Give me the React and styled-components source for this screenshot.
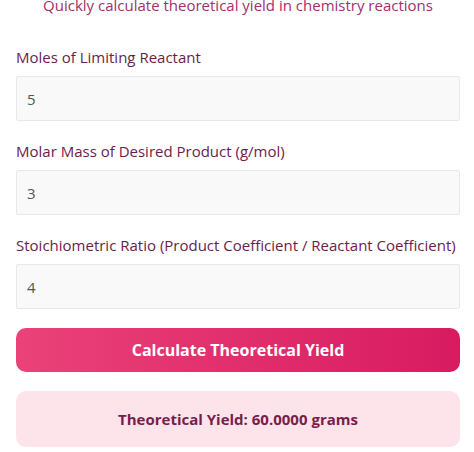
import React, { useState } from 'react'
import styled, { createGlobalStyle } from 'styled-components'

const GlobalStyle = createGlobalStyle`
  html, body {
    margin: 0;
    padding: 0;
    background: #ffffff;
    font-family: "Open Sans", "Noto Sans", sans-serif;
  }
`

const Wrapper = styled.div`
  width: 474px;
  padding: 0 14px 0 16px;
  box-sizing: border-box;
`

const Subtitle = styled.p`
  margin: -6px 0 0;
  text-align: center;
  font-size: 15px;
  line-height: 22px;
  color: #a3306a;
`

const Form = styled.div`
  display: flex;
  flex-direction: column;
  margin-top: 30px;
`

const Field = styled.div`
  display: flex;
  flex-direction: column;
  gap: 8px;
  margin-bottom: 19px;
`

const Label = styled.label`
  font-size: 15px;
  line-height: 22px;
  color: #6b1d4a;
`

const Input = styled.input`
  height: 45px;
  box-sizing: border-box;
  padding: 0 10px;
  border: 1px solid #e8e8e8;
  border-radius: 2px;
  background: #f9f9f9;
  font-family: inherit;
  font-size: 15px;
  color: #555555;
  outline: none;
`

const Button = styled.button`
  height: 44px;
  border: none;
  border-radius: 10px;
  background: linear-gradient(90deg, #ea4279 0%, #d81b60 100%);
  color: #ffffff;
  font-family: inherit;
  font-size: 16px;
  font-weight: 700;
  cursor: pointer;
`

const Result = styled.div`
  margin-top: 19px;
  height: 56px;
  display: flex;
  align-items: center;
  justify-content: center;
  border-radius: 10px;
  background: #fde3ea;
  color: #7b1d4c;
  font-size: 15px;
  font-weight: 700;
`

const fields = [
  { key: 'moles', label: 'Moles of Limiting Reactant', value: '5' },
  { key: 'mass', label: 'Molar Mass of Desired Product (g/mol)', value: '3' },
  { key: 'ratio', label: 'Stoichiometric Ratio (Product Coefficient / Reactant Coefficient)', value: '4' },
]

export default function App() {
  const [values, setValues] = useState(
    Object.fromEntries(fields.map((f) => [f.key, f.value]))
  )
  const [result, setResult] = useState('60.0000')

  const calculate = () => {
    const y = parseFloat(values.moles) * parseFloat(values.mass) * parseFloat(values.ratio)
    setResult(isNaN(y) ? '0.0000' : y.toFixed(4))
  }

  return (
    <Wrapper>
      <GlobalStyle />
      <Subtitle>Quickly calculate theoretical yield in chemistry reactions</Subtitle>
      <Form>
        {fields.map((f) => (
          <Field key={f.key}>
            <Label htmlFor={f.key}>{f.label}</Label>
            <Input
              id={f.key}
              type="number"
              value={values[f.key]}
              onChange={(e) => setValues({ ...values, [f.key]: e.target.value })}
            />
          </Field>
        ))}
        <Button onClick={calculate}>Calculate Theoretical Yield</Button>
        <Result>Theoretical Yield: {result} grams</Result>
      </Form>
    </Wrapper>
  )
}
